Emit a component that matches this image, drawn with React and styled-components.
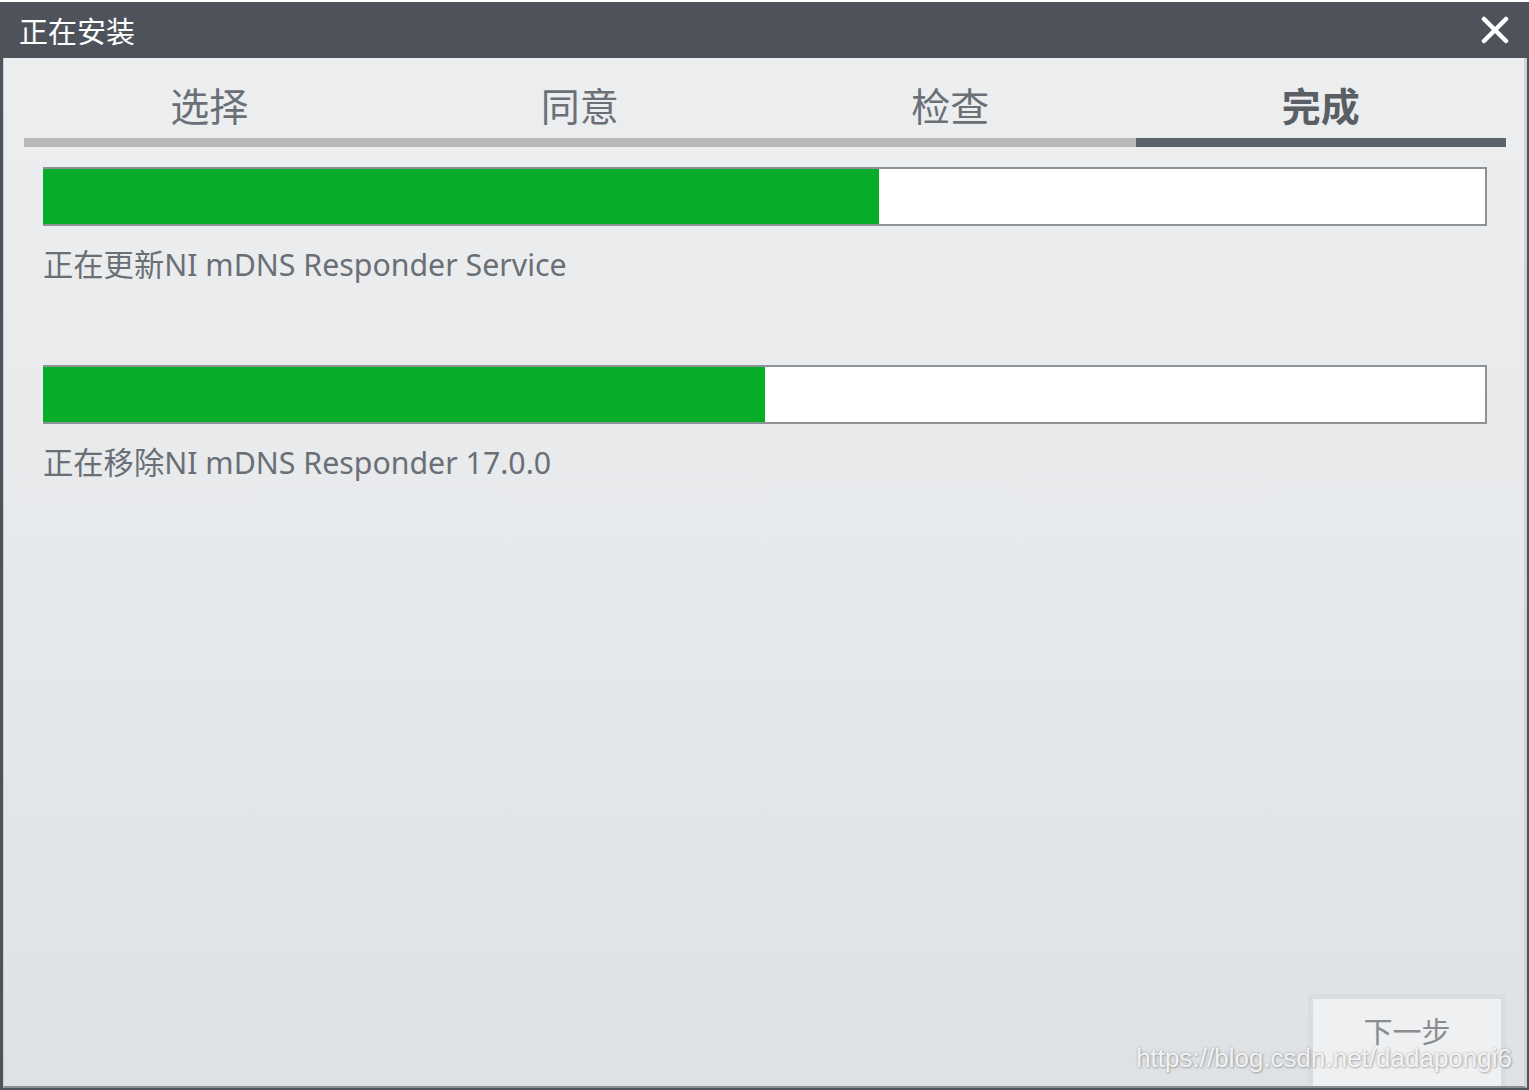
import React from "react";
import styled, { createGlobalStyle } from "styled-components";

const Global = createGlobalStyle`
  html, body { margin: 0; padding: 0; background: #ffffff; }
  body { font-family: "Noto Sans", "Noto Sans CJK SC", sans-serif; }
`;

const Frame = styled.div`
  width: 1529px;
  height: 1088px;
  margin-top: 2px;
  box-sizing: border-box;
  display: flex;
  flex-direction: column;
  background: #4e535b;
  padding: 0 2px 2px 3px;
`;

const TitleBar = styled.div`
  height: 56px;
  display: flex;
  align-items: center;
  justify-content: space-between;
  padding: 0 15px 0 16px;
  color: #ffffff;
  font-family: "Noto Sans CJK SC", sans-serif;
  font-size: 29px;
`;

const Close = styled.button`
  width: 34px;
  height: 34px;
  border: 0;
  padding: 0;
  background: transparent;
  display: flex;
  align-items: center;
  justify-content: center;
`;

const Body = styled.div`
  flex: 1;
  position: relative;
  display: flex;
  flex-direction: column;
  border-left: 1px solid #c9ccd0;
  border-right: 3px solid #d0d3d6;
  border-bottom: 2px solid #8a8d92;
  background: linear-gradient(180deg, #edeef0 0%, #e8eaec 40%, #dfe2e5 100%);
  padding: 0 18px 0 20px;
`;

const Tabs = styled.div`
  display: grid;
  grid-template-columns: repeat(4, 1fr);
`;

const Tab = styled.div`
  height: 89px;
  display: flex;
  align-items: center;
  justify-content: center;
  padding-top: 12px;
  box-sizing: border-box;
  border-bottom: 9px solid ${(p) => (p.$active ? "#5d636b" : "#b9b9b9")};
  font-family: "Noto Sans CJK SC", sans-serif;
  font-size: 39px;
  font-weight: ${(p) => (p.$active ? 700 : 400)};
  color: ${(p) => (p.$active ? "#5a5f66" : "#6b7077")};
`;

const Steps = styled.div`
  display: flex;
  flex-direction: column;
  padding: 20px 19px 0 19px;
`;

const Task = styled.div`
  display: flex;
  flex-direction: column;
  margin-bottom: 80px;
`;

const Track = styled.div`
  height: 59px;
  box-sizing: border-box;
  background: #ffffff;
  border: 2px solid #8e9196;
  border-left: 0;
  display: flex;
`;

const Fill = styled.div`
  background: #06ad29;
  height: 100%;
`;

const Caption = styled.div`
  margin-top: 19px;
  font-family: "Noto Sans", "Noto Sans CJK SC", sans-serif;
  font-size: 30.3px;
  line-height: 40px;
  color: #6a6f76;
`;

const Footer = styled.div`
  margin-top: auto;
  display: flex;
  justify-content: flex-end;
`;

const NextButton = styled.button`
  flex: 0 0 auto;
  width: 198px;
  height: 92px;
  box-sizing: border-box;
  border: 5px solid #d9dce0;
  border-bottom: 0;
  background: #eff0f2;
  color: #8a8c90;
  font-family: "Noto Sans CJK SC", sans-serif;
  font-size: 29px;
  padding: 0 0 26px 0;
`;

const Watermark = styled.div`
  position: absolute;
  right: 12px;
  bottom: 12px;
  font-family: "Liberation Sans", Arial, sans-serif;
  font-size: 26px;
  color: rgba(255, 255, 255, 0.85);
  text-shadow: 0 0 3px rgba(0, 0, 0, 0.25), 1px 1px 2px rgba(0, 0, 0, 0.2);
  pointer-events: none;
`;

const tabs = ["选择", "同意", "检查", "完成"];

const tasks = [
  { pct: 58, label: "正在更新NI mDNS Responder Service" },
  { pct: 50.05, label: "正在移除NI mDNS Responder 17.0.0" },
];

export default function App() {
  return (
    <>
      <Global />
      <Frame>
        <TitleBar>
          <span>正在安装</span>
          <Close aria-label="close">
            <svg width="28" height="28" viewBox="0 0 28 28">
              <path d="M3 3 L25 25 M25 3 L3 25" stroke="#fff" strokeWidth="4.5" strokeLinecap="round" />
            </svg>
          </Close>
        </TitleBar>
        <Body>
          <Tabs>
            {tabs.map((t, i) => (
              <Tab key={t} $active={i === 3}>{t}</Tab>
            ))}
          </Tabs>
          <Steps>
            {tasks.map((t) => (
              <Task key={t.label}>
                <Track>
                  <Fill style={{ width: t.pct + "%" }} />
                </Track>
                <Caption>{t.label}</Caption>
              </Task>
            ))}
          </Steps>
          <Footer>
            <NextButton>下一步</NextButton>
          </Footer>
          <Watermark>https://blog.csdn.net/dadapongi6</Watermark>
        </Body>
      </Frame>
    </>
  );
}
